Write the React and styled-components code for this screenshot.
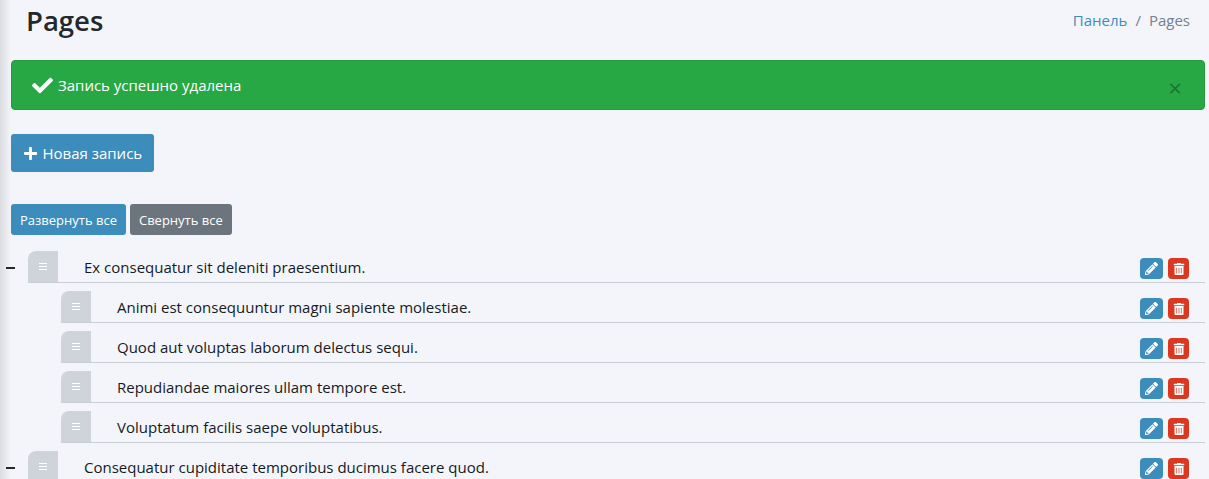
import React from 'react';
import styled, { createGlobalStyle } from 'styled-components';
import { FaCheck, FaPlus, FaPencilAlt, FaTrashAlt } from 'react-icons/fa';

const GlobalStyle = createGlobalStyle`
    html, body {
        margin: 0;
        height: 100%;
        overflow: hidden;
    }
    body {
        background: #f4f5fa;
        color: #23282c;
        font-family: 'Open Sans', 'Noto Sans', sans-serif;
        font-size: 15px;
    }
`;

const Main = styled.div`
    position: relative;
    height: 479px;
    padding: 0 4px 0 11px;
    box-sizing: border-box;
    overflow: hidden;
    &::before {
        content: '';
        position: absolute;
        left: 0;
        top: 0;
        bottom: 0;
        width: 11px;
        background: linear-gradient(to right, #dcdde1, #f4f5fa);
    }
`;

const Header = styled.div`
    position: relative;
    display: flex;
    justify-content: space-between;
    align-items: center;
    height: 41px;
    padding: 0 15px;
    margin-bottom: 19px;
`;

const Title = styled.h1`
    margin: 0;
    font-size: 27.5px;
    font-weight: 600;
    color: #23282c;
`;

const Breadcrumb = styled.div`
    display: flex;
    gap: 8px;
    margin-bottom: 2px;
    color: #73818f;
    font-size: 15px;
    a {
        color: #3c8dbc;
        text-decoration: none;
    }
`;

const Alert = styled.div`
    position: relative;
    display: flex;
    align-items: center;
    gap: 5px;
    height: 50px;
    box-sizing: border-box;
    padding: 0 20px;
    background: #28a745;
    border: 1px solid #239a3e;
    border-radius: 4px;
    color: #fff;
    font-size: 15px;
    svg {
        font-size: 21px;
    }
`;

const Close = styled.span`
    position: absolute;
    right: 22px;
    top: 12px;
    font-size: 24px;
    line-height: 30px;
    color: #000;
    opacity: 0.3;
`;

const Button = styled.button`
    display: inline-flex;
    align-items: center;
    gap: ${(p) => (p.$big ? '5px' : '0')};
    height: ${(p) => (p.$big ? '38px' : '31px')};
    padding: 0 ${(p) => (p.$big ? '11.5px' : '9px')};
    background: ${(p) => (p.$grey ? '#6c757d' : '#3c8dbc')};
    border: none;
    border-radius: 3px;
    color: #fff;
    font-family: inherit;
    font-size: ${(p) => (p.$big ? '15px' : '13px')};
    svg {
        font-size: 15px;
    }
`;

const NewRow = styled.div`
    margin-top: 24px;
`;

const ToggleRow = styled.div`
    display: flex;
    gap: 4px;
    margin-top: 32px;
    margin-bottom: 16px;
`;

const Row = styled.div`
    position: relative;
    display: flex;
    align-items: center;
    box-sizing: border-box;
    height: 32px;
    margin-bottom: 8px;
    margin-left: ${(p) => (p.$child ? '50px' : '17px')};
    border-bottom: 1px solid #c8ced3;
`;

const Minus = styled.span`
    position: absolute;
    left: -22px;
    top: 16px;
    width: 9px;
    height: 2px;
    background: #23282c;
`;

const Handle = styled.div`
    flex: none;
    display: flex;
    align-items: center;
    justify-content: center;
    width: 30px;
    height: 31px;
    background: #cfd4da;
    border-top-left-radius: 8px;
`;

const Bars = styled.span`
    display: block;
    box-sizing: border-box;
    width: 8px;
    height: 7px;
    border-top: 1px solid #fff;
    border-bottom: 1px solid #fff;
    background: linear-gradient(#fff, #fff) center / 100% 1px no-repeat;
`;

const Label = styled.div`
    flex: 1;
    margin-left: 26px;
    font-size: 15px;
    color: #151b1e;
    white-space: nowrap;
`;

const Actions = styled.div`
    display: flex;
    gap: 5px;
    margin-right: 16px;
    margin-bottom: -4px;
`;

const IconButton = styled.span`
    display: flex;
    align-items: center;
    justify-content: center;
    width: ${(p) => (p.$danger ? '21px' : '23px')};
    height: 21px;
    border-radius: 4px;
    background: ${(p) => (p.$danger ? '#db3821' : '#3c8dbc')};
    color: #fff;
    svg {
        font-size: ${(p) => (p.$danger ? '12px' : '13px')};
    }
`;

const rows = [
    { title: 'Ex consequatur sit deleniti praesentium.' },
    { title: 'Animi est consequuntur magni sapiente molestiae.', child: true },
    { title: 'Quod aut voluptas laborum delectus sequi.', child: true },
    { title: 'Repudiandae maiores ullam tempore est.', child: true },
    { title: 'Voluptatum facilis saepe voluptatibus.', child: true },
    { title: 'Consequatur cupiditate temporibus ducimus facere quod.' },
];

export default function App() {
    return (
        <>
            <GlobalStyle />
            <Main>
                <Header>
                    <Title>Pages</Title>
                    <Breadcrumb>
                        <a href="#panel">Панель</a>
                        <span>/</span>
                        <span>Pages</span>
                    </Breadcrumb>
                </Header>
                <Alert>
                    <FaCheck />
                    Запись успешно удалена
                    <Close>×</Close>
                </Alert>
                <NewRow>
                    <Button $big>
                        <FaPlus />
                        Новая запись
                    </Button>
                </NewRow>
                <ToggleRow>
                    <Button>Развернуть все</Button>
                    <Button $grey>Свернуть все</Button>
                </ToggleRow>
                {rows.map((row, index) => (
                    <Row $child={row.child} key={index}>
                        {!row.child && <Minus />}
                        <Handle>
                            <Bars />
                        </Handle>
                        <Label>{row.title}</Label>
                        <Actions>
                            <IconButton>
                                <FaPencilAlt />
                            </IconButton>
                            <IconButton $danger>
                                <FaTrashAlt />
                            </IconButton>
                        </Actions>
                    </Row>
                ))}
            </Main>
        </>
    );
}
